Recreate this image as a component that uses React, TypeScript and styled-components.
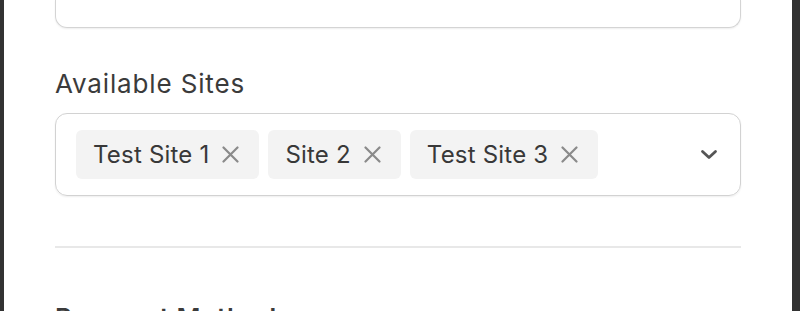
import React from "react";
import styled, { createGlobalStyle } from "styled-components";

const Global = createGlobalStyle`
  html, body { margin: 0; padding: 0; background: #323232; }
  body { font-family: Inter, "Liberation Sans", Arial, sans-serif; }
  #root { height: 311px; overflow: hidden; }
`;

const Panel = styled.div`
  margin-left: 4px;
  width: 788px;
  height: 311px;
  box-sizing: border-box;
  background: #ffffff;
  padding: 0 51px;
  overflow: hidden;
  display: flex;
  flex-direction: column;
  & > * { flex-shrink: 0; }
`;

const ClippedBox = styled.div`
  height: 28px;
  box-sizing: border-box;
  border: 1px solid #d4d4d4;
  border-top: none;
  border-radius: 0 0 12px 12px;
  box-shadow: 0 1px 2px rgba(0, 0, 0, 0.07);
`;

const Label = styled.div`
  margin-top: 41px;
  font-size: 26px;
  line-height: 30px;
  color: #3b3b3b;
  letter-spacing: 0.85px;
`;

const Select = styled.div`
  margin-top: 14px;
  height: 83px;
  box-sizing: border-box;
  border: 1px solid #d2d2d2;
  border-radius: 12px;
  box-shadow: 0 1px 2px rgba(0, 0, 0, 0.07);
  display: flex;
  align-items: center;
  padding: 0 22px 0 20px;
`;

const Chips = styled.div`
  flex: 1;
  display: flex;
  gap: 9px;
`;

const Chip = styled.div`
  height: 49px;
  box-sizing: border-box;
  background: #f3f3f3;
  border-radius: 6px;
  display: flex;
  align-items: center;
  gap: 13px;
  padding: 0 20px 0 17px;
  font-size: 24px;
  color: #383838;
  letter-spacing: 0.2px;
`;

const Remove = styled.span`
  display: flex;
  width: 17px;
  height: 17px;
  color: #8a8a8a;
`;

const Chevron = styled.span`
  display: flex;
  color: #555555;
`;

const Divider = styled.div`
  margin-top: 50px;
  height: 2px;
  background: #e8e8e8;
`;

const Heading = styled.div`
  margin-top: 55px;
  font-size: 26px;
  line-height: 30px;
  font-weight: 600;
  color: #3b3b3b;
  letter-spacing: 0.6px;
  white-space: nowrap;
`;

const XIcon = () => (
  <svg width="17" height="17" viewBox="0 0 17 17">
    <path d="M1.5 1.5 L15.5 15.5 M15.5 1.5 L1.5 15.5" stroke="currentColor" strokeWidth="2.2" strokeLinecap="round" fill="none" />
  </svg>
);

const ChevronIcon = () => (
  <svg width="18" height="11" viewBox="0 0 18 11">
    <polyline points="2.5,2.5 9,8.5 15.5,2.5" stroke="currentColor" strokeWidth="2.8" strokeLinecap="round" strokeLinejoin="round" fill="none" />
  </svg>
);

const sites = ["Test Site 1", "Site 2", "Test Site 3"];

export default function App() {
  return (
    <>
      <Global />
      <Panel>
        <ClippedBox />
        <Label>Available Sites</Label>
        <Select>
          <Chips>
            {sites.map((s) => (
              <Chip key={s}>
                {s}
                <Remove>
                  <XIcon />
                </Remove>
              </Chip>
            ))}
          </Chips>
          <Chevron>
            <ChevronIcon />
          </Chevron>
        </Select>
        <Divider />
        <Heading>Payment Methods</Heading>
      </Panel>
    </>
  );
}
